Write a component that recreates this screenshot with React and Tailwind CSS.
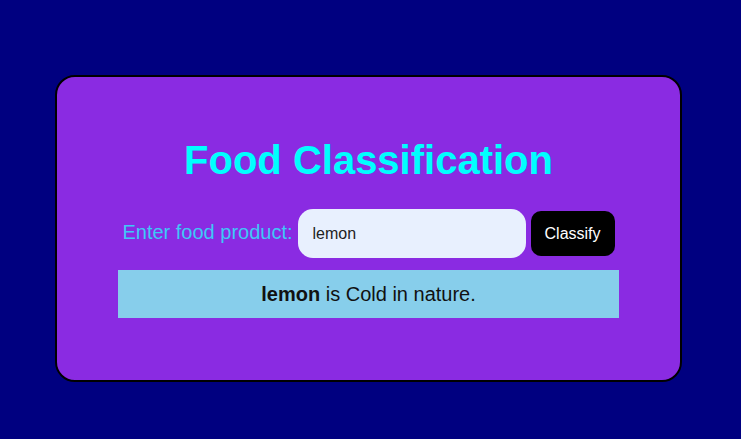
import React, { useState } from "react";

const App = () => {
  const [food, setFood] = useState("lemon");
  const [result, setResult] = useState({ name: "lemon", nature: "Cold" });

  const handleSubmit = (e) => {
    e.preventDefault();
    setResult({ name: food, nature: "Cold" });
  };

  return (
    <div className="min-h-[439px] w-full bg-[#000080] pt-[75px] font-['Liberation_Sans',Arial,sans-serif]">
      <div className="ml-[55px] flex h-[307px] w-[627px] flex-col items-center rounded-[20px] border-2 border-black bg-[#8a2be2] pt-[60px]">
        <h1 className="text-[40px] font-bold leading-[46px] text-[#00ffff]">
          Food Classification
        </h1>

        <form onSubmit={handleSubmit} className="mt-[26px] flex items-baseline gap-[5px]">
          <label htmlFor="food" className="text-[20px] leading-[23px] text-[#3ec8f7]">
            Enter food product:
          </label>
          <input
            id="food"
            type="text"
            value={food}
            onChange={(e) => setFood(e.target.value)}
            className="h-[49px] w-[228px] rounded-[15px] bg-[#e8f0fe] px-[15px] text-[16px] text-[#222] outline-none"
          />
          <button
            type="submit"
            className="h-[45px] w-[84px] rounded-[10px] bg-black text-[16px] text-white"
          >
            Classify
          </button>
        </form>

        <div className="mt-[12px] flex h-[48px] w-[501px] items-center justify-center bg-[#87ceeb] text-[20px] text-[#111]">
          <p>
            <b>{result.name}</b> is {result.nature} in nature.
          </p>
        </div>
      </div>
    </div>
  );
};

export default App;
